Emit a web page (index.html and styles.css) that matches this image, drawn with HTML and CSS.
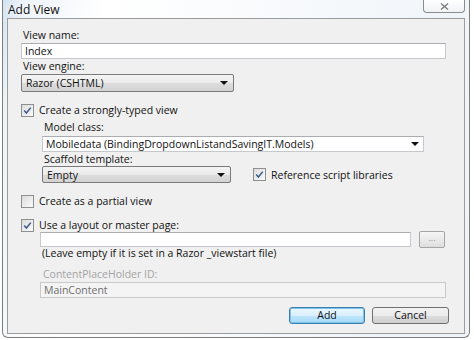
FILE: index.html
```html
<!DOCTYPE html>
<html>
<head>
<meta charset="utf-8">
<link rel="stylesheet" href="styles.css">
</head>
<body>
<div class="window">
  <div class="titlebar">
    <span class="title">Add View</span>
    <div class="close"><svg width="9" height="7" viewBox="0 0 9 7"><path d="M1 0.5 L8 6.5 M8 0.5 L1 6.5" stroke="#7a7a7a" stroke-width="1.3" fill="none"/></svg></div>
  </div>
  <div class="panel">
    <div class="label lbl-first">View name:</div>
    <div class="textbox full">Index</div>
    <div class="label">View engine:</div>
    <div class="select razor"><span>Razor (CSHTML)</span><i class="arrow"></i></div>

    <div class="checkrow row-typed">
      <span class="check on"><svg width="11" height="11" viewBox="0 0 11 11"><path d="M2.2 5.6 L4.4 8 L8.8 2.6" stroke="#3a5a8c" stroke-width="1.5" fill="none"/></svg></span>
      <span>Create a strongly-typed view</span>
    </div>
    <div class="indent">
      <div class="label lbl-model">Model class:</div>
      <div class="combo model"><span>Mobiledata (BindingDropdownListandSavingIT.Models)</span><i class="arrow"></i></div>
      <div class="label">Scaffold template:</div>
      <div class="scaffold-row">
        <div class="select empty"><span>Empty</span><i class="arrow"></i></div>
        <div class="checkrow inline">
          <span class="check on"><svg width="11" height="11" viewBox="0 0 11 11"><path d="M2.2 5.6 L4.4 8 L8.8 2.6" stroke="#3a5a8c" stroke-width="1.5" fill="none"/></svg></span>
          <span>Reference script libraries</span>
        </div>
      </div>
    </div>

    <div class="checkrow row-partial">
      <span class="check"></span>
      <span>Create as a partial view</span>
    </div>
    <div class="checkrow row-layout">
      <span class="check on"><svg width="11" height="11" viewBox="0 0 11 11"><path d="M2.2 5.6 L4.4 8 L8.8 2.6" stroke="#3a5a8c" stroke-width="1.5" fill="none"/></svg></span>
      <span>Use a layout or master page:</span>
    </div>
    <div class="master">
      <div class="master-row">
        <div class="textbox layout"></div>
        <div class="browse">...</div>
      </div>
      <div class="hint">(Leave empty if it is set in a Razor _viewstart file)</div>
      <div class="label disabled">ContentPlaceHolder ID:</div>
      <div class="textbox dis">MainContent</div>
    </div>

    <div class="buttons">
      <div class="btn default">Add</div>
      <div class="btn">Cancel</div>
    </div>
  </div>
</div>
</body>
</html>
```

FILE: styles.css
```css
* { box-sizing: border-box; }
html, body { margin: 0; padding: 0; background: #ffffff; }
body {
  font-family: "Segoe UI", "Open Sans", "Noto Sans", sans-serif;
  font-size: 10.5px;
  color: #111111;
  width: 474px;
  height: 340px;
  overflow: hidden;
}
.window {
  margin-left: 2px;
  width: 468px;
  height: 338px;
  border: 1px solid #7d7d7d;
  border-top: none;
  border-radius: 0 0 6px 6px;
  background: linear-gradient(100deg, #d3e3f1 0%, #eef4f9 4%, #ffffff 20%, #f6f9fc 60%, #edf3f8 100%);
  display: flex;
  flex-direction: column;
}
.titlebar {
  height: 18px;
  display: flex;
  justify-content: space-between;
  align-items: flex-start;
  padding-left: 5px;
  padding-right: 4px;
}
.title {
  font-size: 12px;
  line-height: 14px;
  margin-top: 3px;
  color: #101010;
  text-shadow: 0 0 6px #ffffff;
}
.close {
  width: 42px;
  height: 13px;
  border: 1px solid #8c8c8c;
  border-top: none;
  border-radius: 0 0 4px 4px;
  background: linear-gradient(#ffffff, #f0f2f4);
  display: flex;
  align-items: center;
  justify-content: center;
}
.panel {
  margin: 0 4px 3px 4px;
  flex: 1;
  border: 1px solid #9c9c9c;
  background: #f0f0f0;
  padding: 9px 18px 0 13px;
  display: flex;
  flex-direction: column;
}
.label {
  line-height: 14px;
  height: 14px;
  padding-left: 2px;
  white-space: nowrap;
}
.label.disabled { color: #a3a3a3; }
.textbox {
  height: 16px;
  border: 1px solid #c5c8cd;
  border-top-color: #abadb3;
  background: #ffffff;
  line-height: 14px;
  padding-left: 3px;
  white-space: nowrap;
}
.lbl-first { margin-top: 0; }
.full { margin-top: 1px; }
.select {
  height: 18px;
  border: 1px solid #7a7a7a;
  border-radius: 2px;
  background: linear-gradient(#f4f4f4 0%, #ebebeb 50%, #dddddd 51%, #d3d3d3 100%);
  display: flex;
  align-items: center;
  justify-content: space-between;
  padding: 0 5px 0 4px;
  line-height: 14px;
}
.arrow {
  width: 0;
  height: 0;
  border-left: 4px solid transparent;
  border-right: 4px solid transparent;
  border-top: 4px solid #111111;
}
.razor { width: 213px; margin-top: 1px; }
.checkrow {
  display: flex;
  align-items: center;
  height: 14px;
  line-height: 14px;
  gap: 5px;
  white-space: nowrap;
}
.check {
  width: 13px;
  height: 13px;
  border: 1px solid #8e8f8f;
  background: linear-gradient(135deg, #dcdcdc, #fbfbfb);
  display: flex;
  align-items: center;
  justify-content: center;
  flex: none;
}
.row-typed { margin-top: 11px; }
.indent {
  padding-left: 21px;
  display: flex;
  flex-direction: column;
}
.lbl-model { margin-top: 3px; }
.combo {
  height: 16px;
  border: 1px solid #c5c8cd;
  border-top-color: #abadb3;
  background: #ffffff;
  display: flex;
  align-items: center;
  justify-content: space-between;
  padding: 0 4px 0 3px;
  line-height: 14px;
  white-space: nowrap;
}
.model { width: 382px; margin-top: 2px; }
.scaffold-row {
  display: flex;
  align-items: center;
  height: 17px;
  gap: 22px;
}
.empty { width: 189px; height: 17px; }
.row-partial { margin-top: 11px; }
.row-layout { margin-top: 10px; }
.master {
  padding-left: 19px;
  display: flex;
  flex-direction: column;
}
.master-row {
  display: flex;
  align-items: center;
  height: 15px;
  gap: 8px;
}
.layout { width: 371px; height: 15px; }
.browse {
  width: 26px;
  height: 17px;
  border: 1px solid #a5a5a5;
  border-radius: 2px;
  background: linear-gradient(#f6f6f6, #dedede);
  color: #8a8a8a;
  font-size: 9px;
  line-height: 12px;
  text-align: center;
}
.hint {
  line-height: 12px;
  height: 12px;
  padding-left: 2px;
  white-space: nowrap;
}
.master .disabled { margin-top: 8px; padding-left: 3px; }
.dis {
  margin-top: 1px;
  width: 406px;
  background: #f4f4f4;
  border-color: #c9c9c9;
  color: #6d6d6d;
}
.buttons {
  margin-top: 9px;
  margin-right: -3px;
  display: flex;
  justify-content: flex-end;
  gap: 7px;
}
.btn {
  width: 77px;
  height: 17px;
  border: 1px solid #707070;
  border-radius: 3px;
  background: linear-gradient(#f2f2f2 0%, #ebebeb 50%, #dddddd 51%, #cfcfcf 100%);
  text-align: center;
  line-height: 15px;
}
.btn.default {
  width: 76px;
  border-color: #3c7fb1;
  background: linear-gradient(#eaf6fd 0%, #d9f0fc 50%, #bee6fd 51%, #a7d9f5 100%);
  box-shadow: inset 0 0 0 1px #7ec2ea;
}
```
